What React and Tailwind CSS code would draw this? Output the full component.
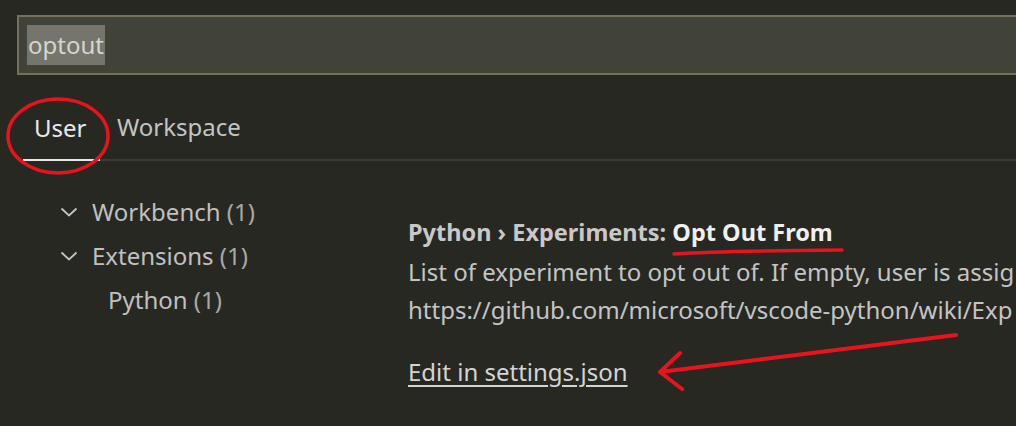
import React from "react";

function Chevron() {
  return (
    <svg width="18" height="12" viewBox="0 0 18 12" className="shrink-0">
      <path d="M1.5 2.5 L9 9.5 L16.5 2.5" fill="none" stroke="#c5c5c5" strokeWidth="1.8" />
    </svg>
  );
}

export default function App() {
  return (
    <div
      className="relative w-[1016px] h-[426px] overflow-hidden bg-[#272822] text-[#cccccc]"
      style={{ fontFamily: '"Noto Sans", "Open Sans", sans-serif' }}
    >
      {/* search */}
      <div className="ml-[17px] mt-[15px] h-[60px] w-[1020px] border-2 border-[#75715e] bg-[#414339] flex items-center pl-[8px]">
        <span className="bg-[#75756b] text-[#d6d6d0] text-[24px] leading-[40px] h-[40px] px-[1px]">optout</span>
      </div>

      {/* tabs */}
      <div className="ml-[23px] mt-[26px] flex items-end border-b-2 border-[#3b3b38] h-[60px]">
        <div className="w-[77px] h-full flex items-center pb-[6px] pl-[11px] border-b-2 border-[#e8e8e8] -mb-[2px] text-[#e8e8e8] text-[24px]">
          User
        </div>
        <div className="h-full flex items-center pb-[6px] pl-[17px] text-[#c4c4c4] text-[24px]">Workspace</div>
      </div>

      {/* body */}
      <div className="flex mt-[29px]">
        <div className="w-[408px] shrink-0 pl-[60px] text-[24px] text-[#c0c0c0]">
          <div className="flex items-center h-[44px] gap-[14px]">
            <Chevron />
            <span>
              Workbench <span className="text-[#a8a8a8]">(1)</span>
            </span>
          </div>
          <div className="flex items-center h-[44px] gap-[14px]">
            <Chevron />
            <span>
              Extensions <span className="text-[#a8a8a8]">(1)</span>
            </span>
          </div>
          <div className="flex items-center h-[44px] pl-[48px]">
            <span>
              Python <span className="text-[#a8a8a8]">(1)</span>
            </span>
          </div>
        </div>
        <div className="flex-1 min-w-0 overflow-hidden whitespace-nowrap pt-[23px]">
          <div className="text-[23.5px] font-bold leading-[38px] text-[#c8c8c8]">
            Python › Experiments: <span className="text-[#f0f0f0]">Opt Out From</span>
          </div>
          <div className="mt-[2px] text-[24px] leading-[38px] text-[#c4c4c4]">
            List of experiment to opt out of. If empty, user is assig
          </div>
          <div className="text-[24px] leading-[38px] text-[#c4c4c4]">
            https://github.com/microsoft/vscode-python/wiki/Exp
          </div>
          <div className="mt-[24px] text-[24px] leading-[38px] text-[#d4d4d4] underline underline-offset-[4px]">
            Edit in settings.json
          </div>
        </div>
      </div>

      {/* annotations */}
      <svg className="absolute inset-0 pointer-events-none" width="1016" height="426" viewBox="0 0 1016 426">
        <ellipse cx="58" cy="136" rx="50" ry="37" fill="none" stroke="#e8131d" strokeWidth="3.5" />
        <path d="M674 254 Q720 251 842 250" fill="none" stroke="#e8131d" strokeWidth="3.5" strokeLinecap="round" />
        <path d="M956 335 L660 372 M680 353 L660 372 L682 389" fill="none" stroke="#e8131d" strokeWidth="4" strokeLinecap="round" strokeLinejoin="round" />
      </svg>
    </div>
  );
}
